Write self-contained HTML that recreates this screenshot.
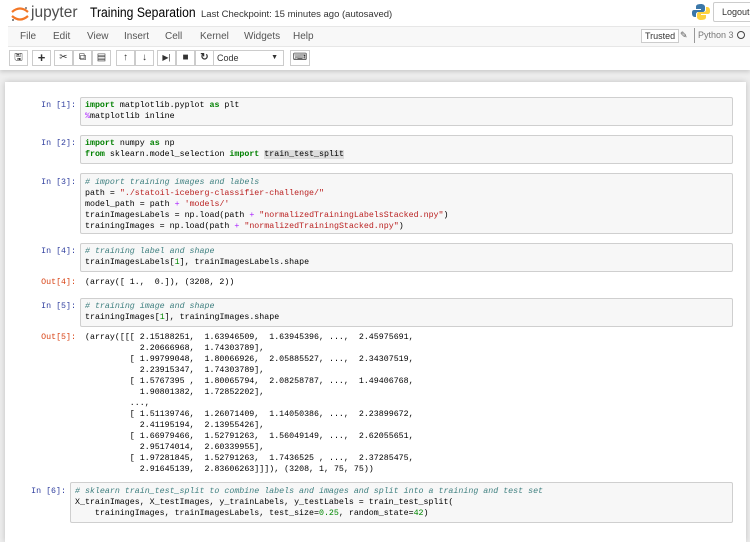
<!DOCTYPE html>
<html><head><meta charset="utf-8"><style>
*{box-sizing:border-box;margin:0;padding:0}
body{width:750px;height:528px;overflow:hidden;background:#eee;font-family:"Liberation Sans",sans-serif;position:relative}
.abs{position:absolute}
#hdr{left:0;top:0;width:750px;height:70px;background:#fff;box-shadow:0 2px 4px rgba(0,0,0,.15);z-index:2}
#menu{left:8px;top:26px;width:742px;height:21px;background:#f8f8f8;border-top:1px solid #e7e7e7;border-bottom:1px solid #e7e7e7}
#menu span{position:absolute;top:4px;font-size:10px;color:#555}
.btn{position:absolute;top:50px;height:16px;border:1px solid #ccc;background:#fff;font-size:10px;text-align:center;line-height:14px;color:#333}
#nb{left:5px;top:82px;width:741px;height:460px;background:#fff;box-shadow:0 0 6px rgba(0,0,0,.2)}
.in{position:absolute;left:80px;width:653px;background:#f7f7f7;border:1px solid #cfcfcf;border-radius:2px}
pre{font-family:"Liberation Mono",monospace;font-size:8.3px;line-height:11px;color:#000;position:absolute;left:85px;white-space:pre}
.p{position:absolute;font-family:"Liberation Mono",monospace;font-size:8.3px;line-height:11px;width:76px;text-align:right;left:0}
.pi{color:#303f9f}.po{color:#d84315}
.k{color:#008000;font-weight:bold}.s{color:#ba2121}.c{color:#408080;font-style:italic}.n{color:#080}.m{color:#aa22ff}
</style></head><body>
<div id="hdr" class="abs">
<svg class="abs" style="left:10px;top:6px" width="20" height="16" viewBox="0 0 20 16"><path d="M2 6 Q10 -1 18 6" stroke="#f37726" stroke-width="2.2" fill="none"/><path d="M2 10 Q10 17 18 10" stroke="#f37726" stroke-width="2.2" fill="none"/><circle cx="16" cy="2" r="1" fill="#767677"/><circle cx="3" cy="14" r="1" fill="#616262"/></svg>
<div class="abs" style="left:31px;top:4px;font-size:15.5px;color:#4e4e4e">jupyter</div>
<div class="abs" style="left:90px;top:5px;font-size:13.5px;color:#000;transform:scaleX(0.9);transform-origin:left">Training Separation</div>
<div class="abs" style="left:201px;top:9px;font-size:9.5px;color:#333">Last Checkpoint: 15 minutes ago (autosaved)</div>
<svg class="abs" style="left:692px;top:3px" width="18" height="18" viewBox="0 0 18 18"><path d="M9 1C4 1 4 3 4 4v2h5v1H2C0 7 0 9 0 10s0 4 3 4h1v-3c0-1 1-2 2-2h5c1 0 2-1 2-2V4c0-2-2-3-4-3z" fill="#3b77a8"/><path d="M9 17c5 0 5-2 5-3v-2H9v-1h7c2 0 2-2 2-3s0-4-3-4h-1v3c0 1-1 2-2 2H7c-1 0-2 1-2 2v3c0 2 2 3 4 3z" fill="#fdd23e"/></svg>
<div class="abs" style="left:713px;top:2px;width:40px;height:20px;border:1px solid #ccc;border-radius:2px;font-size:9px;line-height:18px;padding-left:8px;color:#333">Logout</div>
<div id="menu" class="abs">
<span style="left:12px">File</span><span style="left:45px">Edit</span><span style="left:79px">View</span><span style="left:116px">Insert</span><span style="left:157px">Cell</span><span style="left:192px">Kernel</span><span style="left:236px">Widgets</span><span style="left:285px">Help</span>
<span style="left:633px;top:2px;border:1px solid #ccc;background:#fff;padding:1px 3px;color:#333;font-size:9px">Trusted</span>
<span style="left:672px;top:3px;font-size:9px">✎</span>
<span style="left:686px;top:1px;border-left:1px solid #999;height:15px;padding-left:3px;font-size:9px;color:#777;line-height:15px">Python 3</span>
<span style="left:729px;top:4px;width:8px;height:8px;border:1.5px solid #444;border-radius:50%"></span>
</div>
<div class="btn" style="left:9px;width:19px">🖫</div>
<div class="btn" style="left:32px;width:19px;font-weight:bold;font-size:13px">+</div>
<div class="btn" style="left:54px;width:19px">✂</div>
<div class="btn" style="left:73px;width:19px">⧉</div>
<div class="btn" style="left:92px;width:19px">▤</div>
<div class="btn" style="left:116px;width:19px;font-weight:bold">↑</div>
<div class="btn" style="left:135px;width:19px;font-weight:bold">↓</div>
<div class="btn" style="left:157px;width:19px;font-size:8px">▶|</div>
<div class="btn" style="left:176px;width:19px">■</div>
<div class="btn" style="left:195px;width:19px;font-weight:bold">↻</div>
<div class="btn" style="left:213px;width:71px;text-align:left;padding-left:3px;font-size:9px">Code<span style="position:absolute;right:5px;font-size:7px">▼</span></div>
<div class="btn" style="left:290px;width:20px">⌨</div>
</div>
<div id="nb" class="abs"></div>

<div class="in" style="top:97px;height:29px"></div>
<div class="p pi" style="top:100px">In [1]:</div>
<pre style="top:100px"><span class="k">import</span> matplotlib.pyplot <span class="k">as</span> plt
<span class="m">%</span>matplotlib inline</pre>

<div class="in" style="top:135px;height:29px"></div>
<div class="p pi" style="top:138px">In [2]:</div>
<pre style="top:138px"><span class="k">import</span> numpy <span class="k">as</span> np
<span class="k">from</span> sklearn.model_selection <span class="k">import</span> <span style="background:#ddd">train_test_split</span></pre>

<div class="in" style="top:173px;height:61px"></div>
<div class="p pi" style="top:177px">In [3]:</div>
<pre style="top:177px"><span class="c"># import training images and labels</span>
path = <span class="s">"./statoil-iceberg-classifier-challenge/"</span>
model_path = path <span class="m">+</span> <span class="s">'models/'</span>
trainImagesLabels = np.load(path <span class="m">+</span> <span class="s">"normalizedTrainingLabelsStacked.npy"</span>)
trainingImages = np.load(path <span class="m">+</span> <span class="s">"normalizedTrainingStacked.npy"</span>)</pre>

<div class="in" style="top:243px;height:29px"></div>
<div class="p pi" style="top:246px">In [4]:</div>
<pre style="top:246px"><span class="c"># training label and shape</span>
trainImagesLabels[<span class="n">1</span>], trainImagesLabels.shape</pre>
<div class="p po" style="top:277px">Out[4]:</div>
<pre style="top:277px">(array([ 1.,  0.]), (3208, 2))</pre>

<div class="in" style="top:298px;height:29px"></div>
<div class="p pi" style="top:301px">In [5]:</div>
<pre style="top:301px"><span class="c"># training image and shape</span>
trainingImages[<span class="n">1</span>], trainingImages.shape</pre>
<div class="p po" style="top:332px">Out[5]:</div>
<pre style="top:332px">(array([[[ 2.15188251,  1.63946509,  1.63945396, ...,  2.45975691,
           2.20666968,  1.74303789],
         [ 1.99799048,  1.80066926,  2.05885527, ...,  2.34307519,
           2.23915347,  1.74303789],
         [ 1.5767395 ,  1.80065794,  2.08258787, ...,  1.49406768,
           1.90801382,  1.72852202],
         ...,
         [ 1.51139746,  1.26071409,  1.14050386, ...,  2.23899672,
           2.41195194,  2.13955426],
         [ 1.66979466,  1.52791263,  1.56049149, ...,  2.62055651,
           2.95174014,  2.60339955],
         [ 1.97281845,  1.52791263,  1.7436525 , ...,  2.37285475,
           2.91645139,  2.83606263]]]), (3208, 1, 75, 75))</pre>

<div class="in" style="top:482px;height:41px;left:70px;width:663px"></div>
<div class="p pi" style="top:486px;left:-10px">In [6]:</div>
<pre style="top:486px;left:75px"><span class="c"># sklearn train_test_split to combine labels and images and split into a training and test set</span>
X_trainImages, X_testImages, y_trainLabels, y_testLabels = train_test_split(
    trainingImages, trainImagesLabels, test_size=<span class="n">0.25</span>, random_state=<span class="n">42</span>)</pre>
</body></html>
